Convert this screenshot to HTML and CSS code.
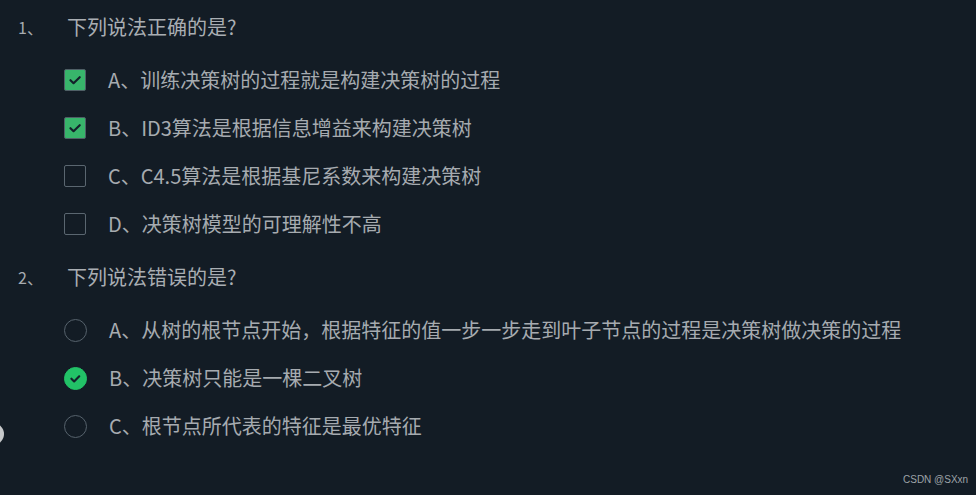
FILE: index.html
```html
<!DOCTYPE html>
<html lang="zh-CN">
<head>
<meta charset="utf-8">
<link rel="stylesheet" href="styles.css">
</head>
<body>
<div class="page">
  <section class="question">
    <div class="q-title"><span class="q-num">1、</span><span class="q-text">下列说法正确的是?</span></div>
    <ul class="options">
      <li class="opt"><span class="box checked"><svg viewBox="0 0 22 22"><path d="M6 11.2l3.4 3.3L16.2 8" /></svg></span><span class="opt-text">A、训练决策树的过程就是构建决策树的过程</span></li>
      <li class="opt"><span class="box checked"><svg viewBox="0 0 22 22"><path d="M6 11.2l3.4 3.3L16.2 8" /></svg></span><span class="opt-text">B、ID3算法是根据信息增益来构建决策树</span></li>
      <li class="opt"><span class="box"></span><span class="opt-text">C、C4.5算法是根据基尼系数来构建决策树</span></li>
      <li class="opt"><span class="box"></span><span class="opt-text">D、决策树模型的可理解性不高</span></li>
    </ul>
  </section>
  <section class="question q2">
    <div class="q-title"><span class="q-num">2、</span><span class="q-text">下列说法错误的是?</span></div>
    <ul class="options">
      <li class="opt"><span class="radio"></span><span class="opt-text">A、从树的根节点开始，根据特征的值一步一步走到叶子节点的过程是决策树做决策的过程</span></li>
      <li class="opt"><span class="radio checked"><svg viewBox="0 0 23 23"><path d="M7 11.8l3 2.9 5.6-5.6" /></svg></span><span class="opt-text">B、决策树只能是一棵二叉树</span></li>
      <li class="opt"><span class="radio"></span><span class="opt-text">C、根节点所代表的特征是最优特征</span></li>
    </ul>
  </section>
  <span class="side-dot"></span>
  <span class="watermark">CSDN @SXxn</span>
</div>
</body>
</html>
```

FILE: styles.css
```css
html, body {
  margin: 0;
  padding: 0;
  background: #131c25;
}
.page {
  position: relative;
  width: 976px;
  height: 495px;
  overflow: hidden;
  font-family: "Noto Sans CJK SC", "Noto Sans", sans-serif;
  font-size: 20px;
  color: #a6abb0;
}
.question {
  margin: 0;
}
.q2 {
  margin-top: 2px;
}
.q-title {
  height: 53px;
  padding-bottom: 3px;
  display: flex;
  align-items: center;
  padding-left: 18px;
}
.q-num {
  width: 49px;
  font-size: 16px;
  color: #a6abb0;
}
.q-text {
  color: #a9aeb3;
}
.options {
  list-style: none;
  margin: 0;
  padding: 0 0 0 64px;
}
.opt {
  height: 48px;
  display: flex;
  align-items: center;
}
.opt-text {
  margin-left: 22px;
  white-space: nowrap;
  position: relative;
  top: -1px;
}
.box {
  width: 20px;
  height: 20px;
  border: 1px solid #5a6670;
  border-radius: 2px;
  display: flex;
  flex: none;
}
.box.checked {
  background: #38b56b;
  border-color: #4f5f66;
}
.box svg, .radio svg {
  width: 100%;
  height: 100%;
}
.box svg path, .radio svg path {
  fill: none;
  stroke: #13202a;
  stroke-width: 2.4;
  stroke-linecap: round;
  stroke-linejoin: round;
}
.radio {
  width: 21px;
  height: 21px;
  border: 1px solid #56626c;
  border-radius: 50%;
  display: flex;
  flex: none;
}
.radio.checked {
  background: #22c267;
  border-color: #22c267;
}
.side-dot {
  position: absolute;
  left: -18px;
  top: 423px;
  width: 22px;
  height: 22px;
  border-radius: 50%;
  background: #c6c8ca;
}
.watermark {
  position: absolute;
  left: 903px;
  top: 474px;
  font-family: "Liberation Sans", Arial, sans-serif;
  font-size: 10px;
  color: #9ea3a8;
}
```
